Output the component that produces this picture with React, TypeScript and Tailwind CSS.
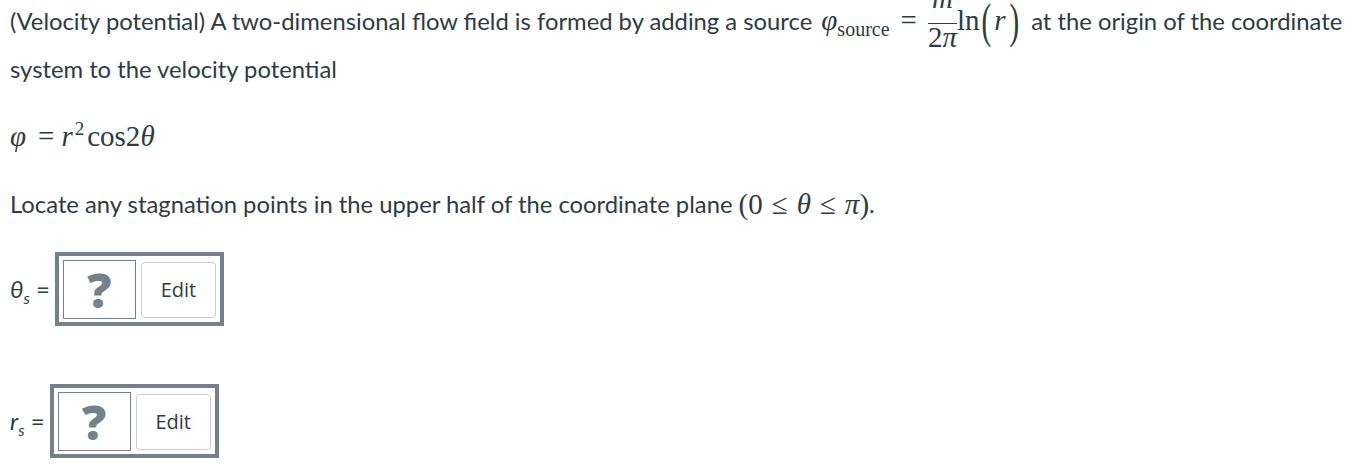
import React from "react";

const serif = "font-['Liberation_Serif',serif]";
const lato = "font-['Lato',sans-serif]";

function AnswerBox({ label, sub }: { label: string; sub: string }) {
  return (
    <div className="flex items-center">
      <span className={`${lato} text-[24px] leading-none text-[#2d3b45] whitespace-nowrap`}>
        <span className="italic">{label}</span>
        <span className="italic text-[16px] relative top-[6px]">{sub}</span>
        <span> =</span>
      </span>
      <div className="ml-[5px] flex items-start border-4 border-[#73818c] pt-[4px] pr-[4px] pb-[3px] pl-[4px]">
        <div className="w-[73px] h-[59px] border border-[#73818c] flex items-center justify-center">
          <span className="font-['Open_Sans',sans-serif] font-extrabold text-[48px] leading-none text-[#73818c]">?</span>
        </div>
        <button className="ml-[5px] mt-[2px] w-[75px] h-[56px] rounded-[4px] border border-[#c7cdd1] bg-white font-['Open_Sans',sans-serif] text-[20px] text-[#2d3b45]">
          Edit
        </button>
      </div>
    </div>
  );
}

export default function App() {
  return (
    <div className="w-[1352px] h-[469px] overflow-hidden bg-white pl-[10px] text-[#2d3b45]">
      {/* first line with inline math */}
      <div className="flex items-start h-[48px] whitespace-nowrap">
        <span className={`${lato} text-[23.8px] leading-[30px] mt-[6px]`}>
          (Velocity potential) A two-dimensional flow field is formed by adding a source&nbsp;
        </span>
        <span className={`${serif} italic text-[29px] leading-none mt-[6px] ml-[3px]`}>φ</span>
        <span className={`${serif} text-[20px] leading-none mt-[19px]`}>source</span>
        <span className={`${serif} text-[29px] leading-none mt-[6px] ml-[11px]`}>=</span>
        <span className={`${serif} inline-flex flex-col items-center text-[29px] leading-none -mt-[16px] ml-[11px]`}>
          <span className="italic pb-[10px] px-[1px]">m</span>
          <span className="w-full h-px bg-[#2d3b45]" />
          <span className="leading-[26px]">
            2<span className="italic">π</span>
          </span>
        </span>
        <span className={`${serif} text-[29px] leading-none mt-[6px]`}>ln</span>
        <span className={`${serif} text-[29px] leading-none mt-[6px] ml-[2px] inline-block scale-y-[1.7]`}>(</span>
        <span className={`${serif} italic text-[29px] leading-none mt-[6px] ml-[3px]`}>r</span>
        <span className={`${serif} text-[29px] leading-none mt-[6px] ml-[4px] inline-block scale-y-[1.7]`}>)</span>
        <span className={`${lato} text-[23.8px] leading-[30px] mt-[6px] ml-[12px]`}>at the origin of the coordinate</span>
      </div>
      <p className={`${lato} text-[23.8px] leading-[30px] mt-[6px]`}>system to the velocity potential</p>

      {/* display math */}
      <div className={`${serif} text-[29px] leading-none mt-[38px] flex items-start whitespace-nowrap`}>
        <span className="italic">φ</span>
        <span className="ml-[12px]">=</span>
        <span className="italic ml-[7px]">r</span>
        <span className="text-[19px] -mt-[3px] ml-[2px]">2</span>
        <span className="ml-[3px]">
          cos2<span className="italic">θ</span>
        </span>
      </div>

      <div className="flex items-start mt-[38px] whitespace-nowrap">
        <span className={`${lato} text-[23.8px] leading-[30px]`}>
          Locate any stagnation points in the upper half of the coordinate plane&nbsp;
        </span>
        <span className={`${serif} text-[29px] leading-none mt-[1px]`}>(0</span>
        <span className={`${serif} text-[29px] leading-none mt-[1px] mx-[9px]`}>≤</span>
        <span className={`${serif} italic text-[29px] leading-none mt-[1px]`}>θ</span>
        <span className={`${serif} text-[29px] leading-none mt-[1px] mx-[9px]`}>≤</span>
        <span className={`${serif} italic text-[29px] leading-none mt-[1px]`}>π</span>
        <span className={`${serif} text-[29px] leading-none mt-[1px]`}>)</span>
        <span className={`${lato} text-[23.8px] leading-[30px]`}>.</span>
      </div>

      <div className="mt-[33px]">
        <AnswerBox label="θ" sub="s" />
      </div>
      <div className="mt-[58px]">
        <AnswerBox label="r" sub="s" />
      </div>
    </div>
  );
}
